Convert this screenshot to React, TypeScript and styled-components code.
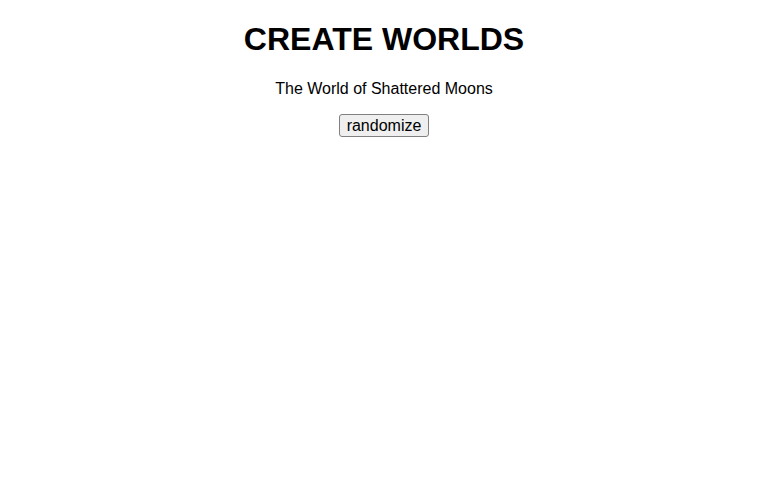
import React from "react";
import styled, { createGlobalStyle } from "styled-components";

const GlobalStyle = createGlobalStyle`
  html, body {
    margin: 0;
    padding: 0;
    background: #ffffff;
  }
  body {
    font-family: "Liberation Sans", Arial, sans-serif;
    color: #000000;
  }
`;

const Page = styled.main`
  display: flex;
  flex-direction: column;
  align-items: center;
  text-align: center;
`;

const Title = styled.h1`
  font-size: 32px;
  font-weight: 700;
  margin: 21px 0 0;
`;

const WorldName = styled.p`
  font-size: 16px;
  margin: 22px 0 16px;
`;

const RandomizeButton = styled.button`
  font-family: "Liberation Sans", Arial, sans-serif;
  font-size: 16px;
  line-height: 19px;
  color: #000000;
  background: #efefef;
  border: 1px solid #808080;
  border-radius: 3px;
  padding: 1px 7px;
  cursor: pointer;
`;

export default function App() {
  return (
    <>
      <GlobalStyle />
      <Page>
        <Title>CREATE WORLDS</Title>
        <WorldName>The World of Shattered Moons</WorldName>
        <RandomizeButton type="button">randomize</RandomizeButton>
      </Page>
    </>
  );
}
